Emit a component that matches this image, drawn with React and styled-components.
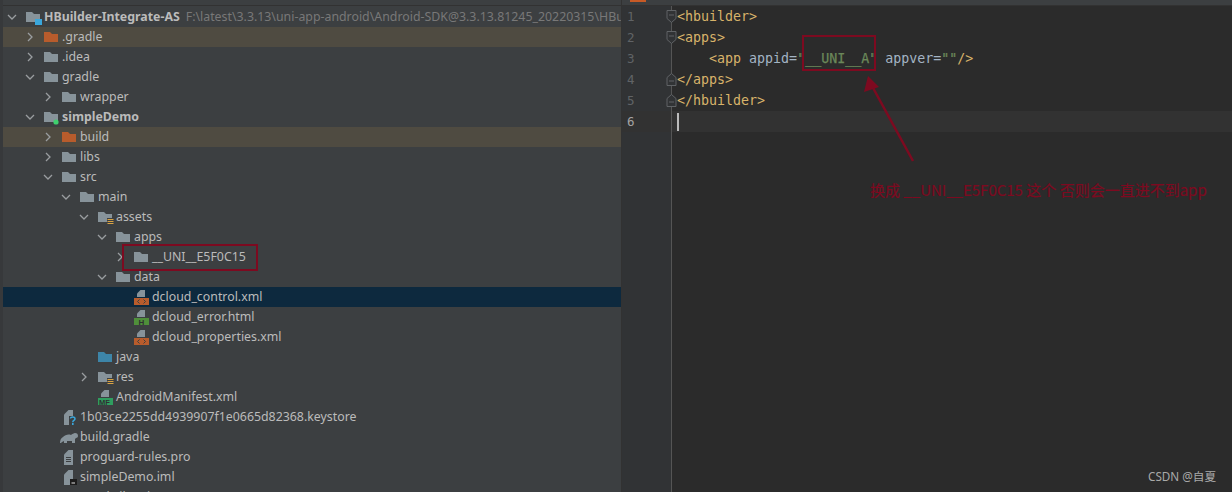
import React from 'react'
import styled, { createGlobalStyle } from 'styled-components'

const GlobalStyle = createGlobalStyle`
  html, body {
    margin: 0;
    padding: 0;
    background: #2b2b2b;
  }
`

const Page = styled.div`
  position: relative;
  display: flex;
  width: 1232px;
  height: 492px;
  overflow: hidden;
`

/* project tree */
const TreePanel = styled.div`
  width: 622px;
  flex: none;
  box-sizing: border-box;
  padding-top: 7px;
  background: #3c3f41;
  border-left: 3px solid #37393b;
  border-right: 1px solid #323232;
  position: relative;
  overflow: hidden;
  font-family: 'Noto Sans', 'Open Sans', sans-serif;
  font-size: 12.35px;
  color: #bbbbbb;
`

const PanelTopLine = styled.div`
  height: 1px;
  margin: -2px 0 1px;
  background: #323232;
`

const Row = styled.div`
  display: flex;
  align-items: center;
  height: 20px;
  padding-left: ${p => p.$level * 18}px;
  white-space: nowrap;
  background: ${p => (p.$selected ? '#0d293e' : p.$ignored ? '#4f4b41' : 'transparent')};
`

const ArrowSlot = styled.span`
  display: flex;
  justify-content: center;
  width: 18px;
  margin-right: 5px;
  flex: none;
`

const IconSlot = styled.span`
  display: flex;
  width: 18px;
  flex: none;
`

const Name = styled.span`
  padding-bottom: 2px;
  font-weight: ${p => (p.$bold ? 700 : 400)};
`

const PathHint = styled.span`
  margin-left: 6px;
  padding-bottom: 2px;
  color: #787878;
`

const Chevron = ({ open }) => (
  <svg width="10" height="10" viewBox="0 0 10 10" fill="none" stroke="#9a9da0" strokeWidth="1.3">
    {open ? <polyline points="1,3 5,7 9,3" /> : <polyline points="3,1 7,5 3,9" />}
  </svg>
)

const folderPath = 'M0 1h6l2 2h6v8H0z'

const FolderIcon = ({ kind }) => {
  const fill = kind === 'ignored' ? '#b85c2c' : kind === 'java' ? '#3d85a8' : '#87939a'
  return (
    <svg width="20" height="16" viewBox="0 0 20 16" style={{ overflow: 'visible' }}>
      <path d={folderPath} transform="translate(0,2)" fill={fill} />
      {kind === 'root' && <rect x="9" y="10" width="7" height="6" fill="#3aa7dc" />}
      {kind === 'module' && <circle cx="12" cy="13" r="2.6" fill="#3fd06e" />}
      {kind === 'resource' && (
        <g stroke="#d9a343" strokeWidth="1">
          <rect x="9" y="9" width="7" height="7" fill="#3c3f41" stroke="none" />
          <line x1="9.5" y1="10.5" x2="15.5" y2="10.5" />
          <line x1="9.5" y1="12.5" x2="15.5" y2="12.5" />
          <line x1="9.5" y1="14.5" x2="15.5" y2="14.5" />
        </g>
      )}
    </svg>
  )
}

const BandIcon = ({ color, children }) => (
  <svg width="16" height="16" viewBox="0 0 16 16">
    <path d="M3 7V4.500L6.500 1H11v7H3z" fill="#87939a" />
    <rect x="0" y="9" width="15" height="7" fill={color} />
    {children}
  </svg>
)

const XmlIcon = () => (
  <BandIcon color="#b85c2c">
    <polyline points="5.500,10.500 3.500,12.500 5.500,14.500" fill="none" stroke="#3c3f41" strokeWidth="1" />
    <polyline points="9.500,10.500 11.500,12.500 9.500,14.500" fill="none" stroke="#3c3f41" strokeWidth="1" />
  </BandIcon>
)

const BandLabel = styled.text`
  font-family: 'Liberation Sans', sans-serif;
  font-size: ${p => p.$size}px;
  font-weight: 700;
  fill: #2f3133;
`

const PlainFile = ({ children }) => (
  <svg width="16" height="16" viewBox="0 0 16 16">
    <path d="M2 5.500L6.500 1H11v15H2z" fill="#87939a" />
    {children}
  </svg>
)

const ElephantIcon = () => (
  <svg width="18" height="14" viewBox="0 0 18 14" style={{ marginLeft: '-2px', flex: 'none' }}>
    <path
      d="M0 13c0-3 1-5 3-6 2-2 5-3 8-2 1-1 3-2 4-2 2 0 3 1 3 3 0 1-1 2-2 2l-1 1v4h-3v-2H7v2H4v-2l-2 1-1 1z"
      fill="#87939a"
    />
  </svg>
)

const FileIcon = ({ kind }) => {
  if (kind === 'xml') return <XmlIcon />
  if (kind === 'html')
    return (
      <BandIcon color="#4f8f3a">
        <BandLabel x="4.500" y="15.500" $size="8">H</BandLabel>
      </BandIcon>
    )
  if (kind === 'manifest')
    return (
      <BandIcon color="#2f9e5f">
        <BandLabel x="1" y="15.500" $size="7.500">MF</BandLabel>
      </BandIcon>
    )
  if (kind === 'gradle') return <ElephantIcon />
  if (kind === 'keystore')
    return (
      <PlainFile>
        <rect x="7" y="7" width="9" height="9" fill="#3c3f41" />
        <path d="M8.500 9.500c0-2 4.500-2 4.500 .3 0 1.700-2.200 1.600-2.200 3.400" fill="none" stroke="#3aa7dc" strokeWidth="1.500" />
        <rect x="10" y="14" width="1.600" height="2" fill="#3aa7dc" />
      </PlainFile>
    )
  if (kind === 'pro')
    return (
      <PlainFile>
        <g stroke="#3c3f41" strokeWidth="1">
          <line x1="4" y1="8.500" x2="9" y2="8.500" />
          <line x1="4" y1="10.500" x2="9" y2="10.500" />
          <line x1="4" y1="12.500" x2="9" y2="12.500" />
        </g>
      </PlainFile>
    )
  return (
    <PlainFile>
      <rect x="8" y="10" width="7" height="6" fill="#1c1c1c" />
      <rect x="9.500" y="13.500" width="3.500" height="1" fill="#dddddd" />
    </PlainFile>
  )
}

const treeRows = [
  { level: 0, name: 'HBuilder-Integrate-AS', bold: true, open: true, folder: 'root', hint: 'F:\\latest\\3.3.13\\uni-app-android\\Android-SDK@3.3.13.81245_20220315\\HBuilder-Integrate-AS' },
  { level: 1, name: '.gradle', open: false, folder: 'ignored', ignored: true },
  { level: 1, name: '.idea', open: false, folder: 'plain' },
  { level: 1, name: 'gradle', open: true, folder: 'plain' },
  { level: 2, name: 'wrapper', open: false, folder: 'plain' },
  { level: 1, name: 'simpleDemo', bold: true, open: true, folder: 'module' },
  { level: 2, name: 'build', open: false, folder: 'ignored', ignored: true },
  { level: 2, name: 'libs', open: false, folder: 'plain' },
  { level: 2, name: 'src', open: true, folder: 'plain' },
  { level: 3, name: 'main', open: true, folder: 'plain' },
  { level: 4, name: 'assets', open: true, folder: 'resource' },
  { level: 5, name: 'apps', open: true, folder: 'plain' },
  { level: 6, name: '__UNI__E5F0C15', open: false, folder: 'plain' },
  { level: 5, name: 'data', open: true, folder: 'plain' },
  { level: 6, name: 'dcloud_control.xml', file: 'xml', selected: true },
  { level: 6, name: 'dcloud_error.html', file: 'html' },
  { level: 6, name: 'dcloud_properties.xml', file: 'xml' },
  { level: 4, name: 'java', folder: 'java' },
  { level: 4, name: 'res', open: false, folder: 'resource' },
  { level: 4, name: 'AndroidManifest.xml', file: 'manifest' },
  { level: 2, name: '1b03ce2255dd4939907f1e0665d82368.keystore', file: 'keystore' },
  { level: 2, name: 'build.gradle', file: 'gradle' },
  { level: 2, name: 'proguard-rules.pro', file: 'pro' },
  { level: 2, name: 'simpleDemo.iml', file: 'iml' },
  { level: 1, name: 'External Libraries', open: false, folder: 'plain' },
]

/* editor */
const Editor = styled.div`
  flex: 1;
  display: flex;
  flex-direction: column;
  background: #2b2b2b;
`

const TabStrip = styled.div`
  height: 5px;
  flex: none;
  background: #3c3f41;
  border-bottom: 1px solid #323232;
  padding-left: 8px;
`

const ActiveTabMark = styled.div`
  width: 16px;
  height: 2px;
  background: #c75a26;
`

const EditorBody = styled.div`
  flex: 1;
  display: flex;
  font-family: 'DejaVu Sans Mono', 'Liberation Mono', monospace;
  font-size: 13.3px;
`

const Gutter = styled.div`
  width: 49px;
  flex: none;
  background: #313335;
  border-right: 1px solid #555555;
`

const GutterLine = styled.div`
  display: flex;
  align-items: center;
  justify-content: space-between;
  height: 21px;
  padding-left: 5px;
  font-size: 12.5px;
  color: ${p => (p.$current ? '#a4a3a3' : '#606366')};
  background: ${p => (p.$current ? '#323232' : 'transparent')};
`

const FoldSvg = styled.svg`
  margin-right: -6px;
  position: relative;
`

const FoldMark = ({ dir }) => (
  <FoldSvg width="11" height="15" viewBox="0 0 11 15" fill="#313335" stroke="#606366" strokeWidth="1">
    <path d={dir === 'open' ? 'M1 1.500h9v8l-4.500 4-4.500-4z' : 'M1 13.500h9v-8l-4.500-4-4.500 4z'} />
    <line x1="3" y1={dir === 'open' ? 6 : 9} x2="8" y2={dir === 'open' ? 6 : 9} />
  </FoldSvg>
)

const CodeColumn = styled.div`
  flex: 1;
  display: flex;
  flex-direction: column;
`

const CodeLine = styled.div`
  height: 21px;
  line-height: 21px;
  padding-left: 5px;
  white-space: pre;
  background: ${p => (p.$current ? '#323232' : 'transparent')};
`

const Tag = styled.span`
  color: #d8b36a;
`

const Attr = styled.span`
  color: #a3b4c4;
`

const Str = styled.span`
  color: #6a8759;
  -webkit-text-stroke: 0.25px #6a8759;
`

const Caret = styled.span`
  display: inline-block;
  vertical-align: middle;
  width: 2px;
  height: 18px;
  background: #bbbbbb;
`

const gutterLines = [
  { n: 1, fold: 'open' },
  { n: 2, fold: 'open' },
  { n: 3 },
  { n: 4, fold: 'close' },
  { n: 5, fold: 'close' },
  { n: 6, current: true },
]

/* annotations drawn over the screenshot */
const RedBox = styled.div`
  position: absolute;
  left: ${p => p.$x}px;
  top: ${p => p.$y}px;
  width: ${p => p.$w}px;
  height: ${p => p.$h}px;
  box-sizing: border-box;
  border: 2px solid #7d0a20;
`

const ArrowLayer = styled.svg`
  position: absolute;
  left: 860px;
  top: 70px;
`

const Note = styled.div`
  position: absolute;
  left: 870px;
  top: 179px;
  font-family: 'Noto Sans CJK SC', sans-serif;
  font-size: 15px;
  font-weight: 400;
  line-height: 22px;
  color: #7d0a20;
  -webkit-text-stroke: 0.2px #7d0a20;
  white-space: pre;
`

const Watermark = styled.div`
  position: absolute;
  left: 1148px;
  top: 468px;
  font-family: 'Noto Sans', 'Noto Sans CJK SC', sans-serif;
  font-size: 11.7px;
  line-height: 17px;
  color: #a9a9a9;
  white-space: pre;
`

const App = () => (
  <Page>
    <GlobalStyle />
    <TreePanel>
      <PanelTopLine />
      {treeRows.map(r => (
        <Row key={r.name} $level={r.level} $ignored={r.ignored} $selected={r.selected}>
          <ArrowSlot>{r.open !== undefined && <Chevron open={r.open} />}</ArrowSlot>
          <IconSlot>{r.file ? <FileIcon kind={r.file} /> : <FolderIcon kind={r.folder} />}</IconSlot>
          <Name $bold={r.bold}>{r.name}</Name>
          {r.hint && <PathHint>{r.hint}</PathHint>}
        </Row>
      ))}
    </TreePanel>
    <Editor>
      <TabStrip>
        <ActiveTabMark />
      </TabStrip>
      <EditorBody>
        <Gutter>
          {gutterLines.map(l => (
            <GutterLine key={l.n} $current={l.current}>
              <span>{l.n}</span>
              {l.fold && <FoldMark dir={l.fold} />}
            </GutterLine>
          ))}
        </Gutter>
        <CodeColumn>
          <CodeLine><Tag>&lt;hbuilder&gt;</Tag></CodeLine>
          <CodeLine><Tag>&lt;apps&gt;</Tag></CodeLine>
          <CodeLine>
            {'    '}
            <Tag>&lt;app</Tag> <Attr>appid=</Attr><Str>"__UNI__A"</Str> <Attr>appver=</Attr><Str>""</Str><Tag>/&gt;</Tag>
          </CodeLine>
          <CodeLine><Tag>&lt;/apps&gt;</Tag></CodeLine>
          <CodeLine><Tag>&lt;/hbuilder&gt;</Tag></CodeLine>
          <CodeLine $current><Caret /></CodeLine>
        </CodeColumn>
      </EditorBody>
    </Editor>
    <RedBox $x={122} $y={244} $w={136} $h={27} />
    <RedBox $x={802} $y={35} $w={74} $h={36} />
    <ArrowLayer width="60" height="95" viewBox="0 0 60 95">
      <line x1="53" y1="91" x2="12" y2="16" stroke="#7d0a20" strokeWidth="2.500" />
      <path d="M8 6L19 17 4 22z" fill="#7d0a20" />
    </ArrowLayer>
    <Note>换成 __UNI__E5F0C15 这个 否则会一直进不到app</Note>
    <Watermark>CSDN @自夏</Watermark>
  </Page>
)

export default App
